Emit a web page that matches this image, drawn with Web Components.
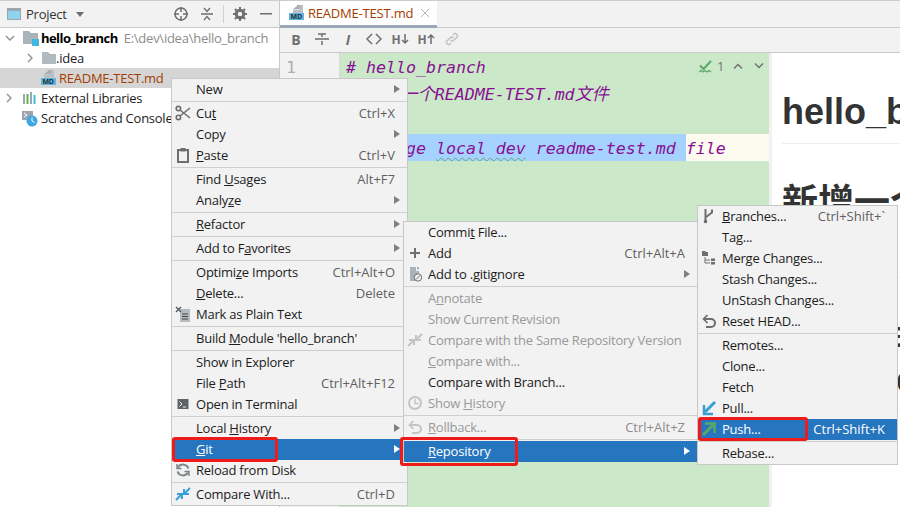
<!DOCTYPE html>
<html lang="en">
<head>
<meta charset="utf-8">
<title>Git push menu</title>
<style>
  html, body { margin: 0; padding: 0; background: #fff; overflow: hidden; }
  body { width: 900px; height: 507px; font: 13px "Open Sans", "Noto Sans CJK SC", sans-serif; }
  svg { display: block; }
</style>
</head>
<body>
<ide-window>
  <project-panel slot="left"></project-panel>
  <editor-pane slot="center"><md-preview></md-preview></editor-pane>

  <popup-menu slot="overlay" style="left:171px;top:77px;width:235px">
    <menu-item arrow>New</menu-item>
    <menu-sep></menu-sep>
    <menu-item shortcut="Ctrl+X"><svg slot="icon" width="16" height="16" viewBox="0 0 16 16" fill="none" stroke="#6e6e6e" stroke-width="1.6"><circle cx="3.4" cy="3.6" r="2.2"/><circle cx="3.4" cy="12.4" r="2.2"/><path d="M5 5 15 13M5 11 15 3"/></svg>Cu<u>t</u></menu-item>
    <menu-item arrow>Copy</menu-item>
    <menu-item shortcut="Ctrl+V"><svg slot="icon" width="16" height="16" viewBox="0 0 16 16" fill="none"><rect x="3" y="3" width="10" height="12" stroke="#6e6e6e" stroke-width="2"/><rect x="5.5" y="1" width="5" height="3.5" fill="#6e6e6e"/></svg><u>P</u>aste</menu-item>
    <menu-sep></menu-sep>
    <menu-item shortcut="Alt+F7">Find <u>U</u>sages</menu-item>
    <menu-item arrow>Analy<u>z</u>e</menu-item>
    <menu-sep></menu-sep>
    <menu-item arrow><u>R</u>efactor</menu-item>
    <menu-sep></menu-sep>
    <menu-item arrow>Add to F<u>a</u>vorites</menu-item>
    <menu-sep></menu-sep>
    <menu-item shortcut="Ctrl+Alt+O">Optimi<u>z</u>e Imports</menu-item>
    <menu-item shortcut="Delete"><u>D</u>elete...</menu-item>
    <menu-item><svg slot="icon" width="16" height="16" viewBox="0 0 16 16" fill="none"><rect x="5" y="3" width="10" height="13" fill="#b4bcc2"/><path d="M1 1 6 6M6 1 1 6" stroke="#555" stroke-width="1.3"/><path d="M7 8h6M7 10.5h6M7 13h6" stroke="#444"/></svg>Mark as Plain Text</menu-item>
    <menu-sep></menu-sep>
    <menu-item>Build <u>M</u>odule 'hello_branch'</menu-item>
    <menu-sep></menu-sep>
    <menu-item>Show in Explorer</menu-item>
    <menu-item shortcut="Ctrl+Alt+F12">File <u>P</u>ath</menu-item>
    <menu-item><svg slot="icon" width="16" height="16" viewBox="0 0 16 16" fill="none"><rect x="2.5" y="3" width="11" height="10" fill="#5f6468"/><path d="M4.5 5.5 7 8 4.5 10.5M8 11h3" stroke="#f2f2f2"/></svg>Open in Terminal</menu-item>
    <menu-sep></menu-sep>
    <menu-item arrow>Local <u>H</u>istory</menu-item>
    <menu-item arrow selected><u>G</u>it</menu-item>
    <menu-item><svg slot="icon" width="16" height="16" viewBox="0 0 16 16" fill="none" stroke="#7d8488" stroke-width="2"><path d="M13.5 6.5A5.8 5.8 0 0 0 3 5.5M2.5 9.5A5.8 5.8 0 0 0 13 10.5"/><path d="M2 2v4.5h4.5M14 14V9.5H9.5" stroke-width="1.5"/></svg>Reload from Disk</menu-item>
    <menu-sep></menu-sep>
    <menu-item shortcut="Ctrl+D"><svg slot="icon" width="16" height="16" viewBox="0 0 16 16" fill="none" stroke="#389fd6" stroke-width="2"><path d="M15 2 9.5 7.5M9 3v5h5"/><path d="M1 14 6.5 8.5M7 13V8H2"/></svg>Compare With...</menu-item>
  </popup-menu>

  <popup-menu slot="overlay" style="left:403px;top:220px;width:293px;border-bottom:none">
    <menu-item>Commi<u>t</u> File...</menu-item>
    <menu-item shortcut="Ctrl+Alt+A"><svg slot="icon" width="16" height="16" viewBox="0 0 16 16" fill="none" stroke="#6e6e6e" stroke-width="2"><path d="M8 3v10M3 8h10"/></svg>Add</menu-item>
    <menu-item arrow><svg slot="icon" width="16" height="16" viewBox="0 0 16 16" fill="none"><path d="M3 1h6v4h3v10H3z" fill="#aab3b9"/><path d="M10 1h2v2.5h-2z" fill="#aab3b9"/><circle cx="11" cy="11.5" r="3.7" fill="#f2f2f2" stroke="#6e6e6e"/><path d="M9 13.5 13 9.5" stroke="#6e6e6e"/></svg>Add to .gitignore</menu-item>
    <menu-sep></menu-sep>
    <menu-item disabled>A<u>n</u>notate</menu-item>
    <menu-item disabled>Show Current Revision</menu-item>
    <menu-item disabled><svg slot="icon" width="16" height="16" viewBox="0 0 16 16" fill="none" stroke="#c4c4c4" stroke-width="2"><path d="M15 2 9.5 7.5M9 3v5h5"/><path d="M1 14 6.5 8.5M7 13V8H2"/></svg>Compare with the Same Repository Version</menu-item>
    <menu-item disabled><u>C</u>ompare with...</menu-item>
    <menu-item>Compare with Branch...</menu-item>
    <menu-item disabled><svg slot="icon" width="16" height="16" viewBox="0 0 16 16" fill="none" stroke="#c4c4c4" stroke-width="2"><circle cx="8" cy="8" r="6"/><path d="M8 4v4.5h3.5" stroke-width="1.5"/></svg>Show <u>H</u>istory</menu-item>
    <menu-sep></menu-sep>
    <menu-item disabled shortcut="Ctrl+Alt+Z"><svg slot="icon" width="16" height="16" viewBox="0 0 16 16" fill="none" stroke="#c4c4c4" stroke-width="2"><path d="M3 6h7a4 4 0 0 1 0 8H5"/><path d="M6.5 2 2.5 6l4 4" stroke-width="1.7"/></svg><u>R</u>ollback...</menu-item>
    <menu-sep></menu-sep>
    <menu-item arrow selected><u>R</u>epository</menu-item>
  </popup-menu>

  <popup-menu slot="overlay" style="left:697px;top:204px;width:199px">
    <menu-item shortcut="Ctrl+Shift+`"><svg slot="icon" width="16" height="16" viewBox="0 0 16 16" fill="none" stroke="#6e6e6e" stroke-width="2"><path d="M4.5 1v14"/><path d="M11 1.5v3L5 9"/><circle cx="4.5" cy="13.5" r=".8"/></svg><u>B</u>ranches...</menu-item>
    <menu-item>Tag...</menu-item>
    <menu-item><svg slot="icon" width="16" height="16" viewBox="0 0 16 16" fill="none"><path d="M1 1h3l1 1h2v4H1z" fill="#6e6e6e"/><path d="M4 7v6h5M4 10h5" stroke="#6e6e6e"/><rect x="10" y="8.5" width="4" height="2.5" fill="#6e6e6e"/><rect x="10" y="12" width="4" height="2.5" fill="#6e6e6e"/></svg>Merge Changes...</menu-item>
    <menu-item>Stash Changes...</menu-item>
    <menu-item>UnStash Changes...</menu-item>
    <menu-item><svg slot="icon" width="16" height="16" viewBox="0 0 16 16" fill="none" stroke="#6e6e6e" stroke-width="2"><path d="M3 6h7a4 4 0 0 1 0 8H5"/><path d="M6.5 2 2.5 6l4 4" stroke-width="1.7"/></svg>Reset HEAD...</menu-item>
    <menu-sep></menu-sep>
    <menu-item>Remotes...</menu-item>
    <menu-item>Clone...</menu-item>
    <menu-item>Fetch</menu-item>
    <menu-item><svg slot="icon" width="16" height="16" viewBox="0 0 16 16" fill="none" stroke="#389fd6" stroke-width="3"><path d="M14 2 4 12"/><path d="M3 5v9h9" stroke-width="2.5"/></svg>Pull...</menu-item>
    <menu-item selected shortcut="Ctrl+Shift+K"><svg slot="icon" width="16" height="16" viewBox="0 0 16 16" fill="none" stroke="#59a869" stroke-width="3"><path d="M2 14 12 4"/><path d="M4 2.5h9.5V12" stroke-width="2.5"/></svg>Push...</menu-item>
    <menu-sep></menu-sep>
    <menu-item>Rebase...</menu-item>
  </popup-menu>

  <red-mark slot="overlay" style="left:172px;top:436px;width:100px;height:19px"></red-mark>
  <red-mark slot="overlay" style="left:400px;top:436px;width:112px;height:23px"></red-mark>
  <red-mark slot="overlay" style="left:698px;top:416px;width:104px;height:18px"></red-mark>
</ide-window>

<script>
const sheet = `
  :host { box-sizing: border-box; }
  * { box-sizing: border-box; }
  svg { display: block; flex: none; }
`;

class IdeWindow extends HTMLElement {
  constructor() {
    super();
    this.attachShadow({ mode: 'open' });
    this.shadowRoot.innerHTML = `
      <style>
        ${sheet}
        :host { display: flex; position: relative; width: 900px; height: 507px; overflow: hidden; border-top: 1px solid #cdcdcd; background: #fff; color: #1c1c1c; }
        .left { flex: none; width: 280px; border-right: 1px solid #c9c9c9; display: flex; }
        .center { flex: 1; min-width: 0; display: flex; }
      </style>
      <div class="left"><slot name="left"></slot></div>
      <div class="center"><slot name="center"></slot></div>
      <slot name="overlay"></slot>
    `;
  }
}

class ProjectPanel extends HTMLElement {
  constructor() {
    super();
    this.attachShadow({ mode: 'open' });
    const md = `<svg width="16" height="16" viewBox="0 0 16 16"><path d="M8 0h3v4H8zM4 4h4V1L4 4z" fill="#a8b0b6"/><path d="M11 0h3v8h-3zM4 4.5h7V8H4z" fill="#b9c0c5"/><rect x="1" y="8" width="15" height="7" fill="#61b4e0"/><text x="2.5" y="14.2" font-family="Open Sans" font-weight="700" font-size="7" fill="#233">MD</text></svg>`;
    this.shadowRoot.innerHTML = `
      <style>
        ${sheet}
        :host { display: flex; flex-direction: column; width: 100%; background: #fff; font: 13px "Open Sans", sans-serif; letter-spacing: -.25px; }
        header { height: 27px; flex: none; background: #f2f2f2; border-bottom: 1px solid #c9c9c9; display: flex; align-items: center; padding-left: 7px; color: #333; }
        header .name { margin-left: 5px; }
        header .tools { display: flex; align-items: center; margin-left: auto; }
        .bar { width: 1px; height: 18px; background: #d0d0d0; }
        .row { height: 20px; display: flex; align-items: center; white-space: nowrap; position: relative; }
        .row svg { margin-right: 2px; }
        .chev { width: 16px; margin-left: 2px; margin-right: 2px !important; }
        .sel { background: #d5d5d5; }
        .path { color: #8c8c8c; margin-left: 6px; }
        .brown { color: #a33c00; }
      </style>
      <header>
        <svg width="14" height="14" viewBox="0 0 14 14"><rect x=".5" y="1.5" width="13" height="11" fill="#8fd3ef" stroke="#9aa7b0"/><rect x="1" y="2" width="12" height="2" fill="#9aa7b0"/></svg>
        <span class="name">Project</span>
        <svg style="margin-left:9px" width="8" height="5" viewBox="0 0 8 5"><path d="M0 0h8L4 5z" fill="#6e6e6e"/></svg>
        <div class="tools">
          <svg style="margin-right:11px" width="16" height="16" viewBox="0 0 16 16" fill="none" stroke="#6e6e6e" stroke-width="1.5"><circle cx="8" cy="8" r="6"/><path d="M8 1v5M8 10v5M1 8h5M10 8h5"/></svg>
          <svg style="margin-right:9px" width="14" height="16" viewBox="0 0 14 16" fill="none" stroke="#6e6e6e" stroke-width="1.3"><path d="M1 8h12M4 2l3 3.5L10 2M4 14l3-3.5L10 14"/></svg>
          <div class="bar"></div>
          <svg style="margin:0 13px 0 9px" width="14" height="14" viewBox="0 0 14 14"><circle cx="7" cy="7" r="3.8" fill="none" stroke="#6e6e6e" stroke-width="3"/><path d="M7 0v3M7 11v3M0 7h3M11 7h3M2 2l2 2M10 10l2 2M12 2l-2 2M4 10l-2 2" stroke="#6e6e6e" stroke-width="2"/></svg>
          <svg style="margin-right:7px" width="12" height="2" viewBox="0 0 12 2"><rect width="12" height="1.5" fill="#6e6e6e"/></svg>
        </div>
      </header>
      <div class="row">
        <svg class="chev" style="margin-left:2px" width="16" height="16" viewBox="0 0 16 16" fill="none" stroke="#8c8c8c" stroke-width="1.3"><path d="M4 6l4 4 4-4"/></svg>
        <svg style="margin-left:2px;margin-right:1px" width="18" height="16" viewBox="0 0 18 16"><path d="M1 1h6l2 2h7v11H1z" fill="#a9b3ba"/><rect x="10" y="9" width="7" height="7" fill="#40b6e0"/></svg>
        <b style="font-weight:700;color:#000;letter-spacing:-.55px">hello_branch</b>
        <span class="path">E:\\dev\\idea\\hello_branch</span>
      </div>
      <div class="row" style="padding-left:20px">
        <svg class="chev" width="16" height="16" viewBox="0 0 16 16" fill="none" stroke="#8c8c8c" stroke-width="1.3"><path d="M6 4l4 4-4 4"/></svg>
        <svg style="margin-left:1px;margin-right:0" width="16" height="16" viewBox="0 0 16 16"><path d="M1 2h6l2 2h6v10H1z" fill="#b1bac0"/></svg>
        <span style="margin-left:-1px">.idea</span>
      </div>
      <div class="row sel" style="padding-left:40px">${md}<span class="brown" style="margin-left:1px">README-TEST.md</span></div>
      <div class="row">
        <svg class="chev" width="16" height="16" viewBox="0 0 16 16" fill="none" stroke="#8c8c8c" stroke-width="1.3" style="margin-left:1px"><path d="M6 4l4 4-4 4"/></svg>
        <svg style="margin-left:4px;margin-right:4px" width="14" height="14" viewBox="0 0 14 14" fill="none" stroke-width="2"><path d="M1 3v10" stroke="#9aa7b0"/><path d="M4.5 3v10" stroke="#62b543"/><path d="M8 1v12" stroke="#9aa7b0"/><path d="M11.5 4v9" stroke="#40b6e0"/></svg>
        <span>External Libraries</span>
      </div>
      <div class="row" style="padding-left:21px">
        <svg style="margin-right:3px" width="17" height="17" viewBox="0 0 17 17"><rect x="1" y="1" width="11" height="9" fill="#9aa7b0"/><path d="M3 3l3 2-3 2" stroke="#fff" fill="none"/><circle cx="11" cy="11" r="5.5" fill="#40a8e0"/><path d="M11 7.5V11l2.5 1.5" stroke="#fff" fill="none"/></svg>
        <span>Scratches and Consoles</span>
      </div>
    `;
  }
}

class EditorPane extends HTMLElement {
  constructor() {
    super();
    this.attachShadow({ mode: 'open' });
    this.shadowRoot.innerHTML = `
      <style>
        ${sheet}
        :host { display: flex; flex-direction: column; width: 100%; height: 100%; background: #f2f2f2; }
        .tabs { height: 27px; flex: none; border-bottom: 1px solid #c9c9c9; display: flex; }
        .tab { width: 157px; height: 27px; background: #fff; border-bottom: 3px solid #9ca7b8; display: flex; align-items: center; padding-left: 9px; font: 13px "Open Sans", sans-serif; color: #a33c00; letter-spacing: -.2px; position: relative; }
        .tab span { margin-left: 3px; }
        .tab .x { position: absolute; left: 140px; top: 7px; }
        .tools { height: 25px; flex: none; border-bottom: 1px solid #c9c9c9; padding-bottom: 2px; display: flex; align-items: center; font: 700 14px "Open Sans", sans-serif; color: #707070; }
        .tool { width: 26px; display: flex; justify-content: center; align-items: center; height: 22px; }
        .tool.h { font-size: 12px; }
        .body { flex: 1; display: flex; min-height: 0; }
        .gutter { width: 60px; flex: none; border-right: 1px solid #d9d9d9; color: #a9b0b6; font: 16.6px/29px "DejaVu Sans Mono", monospace; padding-left: 6px; }
        .code { width: 429px; flex: none; background: #cbe8c8; position: relative; font: italic 16.6px/29px "DejaVu Sans Mono", "Noto Sans CJK SC", monospace; color: #871094; }
        .line { height: 27px; padding-left: 6px; white-space: pre; }
        .cjk { font-size: 17.2px; }
        .caret { background: #fdfbf0; }
        .picked { background: #a6d2ff; display: inline-block; height: 27px; }
        .weak { text-decoration: underline wavy #62a87a 1px; text-underline-offset: 3px; }
        .widget { position: absolute; left: 359px; top: 4px; display: flex; align-items: center; font: 13px "Open Sans", sans-serif; color: #6e7a70; height: 18px; }
        .preview { flex: 1; min-width: 0; display: flex; }
      </style>
      <div class="tabs">
        <div class="tab">
          <svg width="16" height="16" viewBox="0 0 16 16"><path d="M8 0h3v4H8zM4 4h4V1L4 4z" fill="#a8b0b6"/><path d="M11 0h3v8h-3zM4 4.5h7V8H4z" fill="#b9c0c5"/><rect x="0" y="8" width="15" height="7" fill="#61b4e0"/><text x="1.5" y="14.2" font-family="Open Sans" font-weight="700" font-size="7" fill="#233">MD</text></svg>
          <span>README-TEST.md</span>
          <svg class="x" width="10" height="10" viewBox="0 0 10 10" fill="none" stroke="#b4b4b4"><path d="M1 1l8 8M9 1l-8 8"/></svg>
        </div>
      </div>
      <div class="tools">
        <div class="tool" style="margin-left:3px">B</div>
        <div class="tool"><svg width="14" height="14" viewBox="0 0 14 14" fill="none" stroke="#6e6e6e" stroke-width="1.5"><path d="M3 2h8M7 2v3M0 7h14M7 9v4"/></svg></div>
        <div class="tool" style="font-style:italic">I</div>
        <div class="tool"><svg width="16" height="14" viewBox="0 0 16 14" fill="none" stroke="#6e6e6e" stroke-width="1.5"><path d="M6 2 1 7l5 5M10 2l5 5-5 5"/></svg></div>
        <div class="tool h">H<svg width="8" height="12" viewBox="0 0 8 12" fill="none" stroke="#6e6e6e" stroke-width="1.5"><path d="M4 1v9M1 7l3 3 3-3"/></svg></div>
        <div class="tool h">H<svg width="8" height="12" viewBox="0 0 8 12" fill="none" stroke="#6e6e6e" stroke-width="1.5"><path d="M4 11V2M1 5l3-3 3 3"/></svg></div>
        <div class="tool"><svg width="14" height="14" viewBox="0 0 14 14" fill="none" stroke="#c4c4c4" stroke-width="1.5"><path d="M8 3l1.5-1.5a2.5 2.5 0 0 1 3 3L9 8a2.5 2.5 0 0 1-3.5 0"/><path d="M6 11l-1.5 1.5a2.5 2.5 0 0 1-3-3L5 6a2.5 2.5 0 0 1 3.5 0"/></svg></div>
      </div>
      <div class="body">
        <div class="gutter">1</div>
        <div class="code">
          <div class="line"># hello_branch</div>
          <div class="line"># <span class="cjk">新增一个</span>README-TEST.md<span class="cjk">文件</span></div>
          <div class="line"></div>
          <div class="line caret"><span class="picked"># change <span class="weak">local dev</span> readme-test.md </span>file</div>
          <div class="widget">
            <svg width="13" height="13" viewBox="0 0 13 13" fill="none" stroke="#59a869" stroke-width="2"><path d="M1 5.5 4.5 9 12 1"/><path d="M0 12l2-1.5 2 1.5 2-1.5 2 1.5 2-1.5 2 1.5" stroke-width="1.2"/></svg>
            <span style="margin-left:5px">1</span>
            <svg style="margin-left:9px" width="10" height="6" viewBox="0 0 10 6" fill="none" stroke="#6e6e6e" stroke-width="1.3"><path d="M1 5.5 5 1.5l4 4"/></svg>
            <svg style="margin-left:11px" width="10" height="6" viewBox="0 0 10 6" fill="none" stroke="#6e6e6e" stroke-width="1.3"><path d="M1 .5l4 4 4-4"/></svg>
          </div>
        </div>
        <div class="preview"><slot></slot></div>
      </div>
    `;
  }
}

class MdPreview extends HTMLElement {
  constructor() {
    super();
    this.attachShadow({ mode: 'open' });
    this.shadowRoot.innerHTML = `
      <style>
        ${sheet}
        :host { display: block; width: 100%; height: 100%; overflow: hidden; background: #fff; padding: 36px 0 0 10px; border-left: 3px solid #f2f2f2; }
        h1 { width: 800px; height: 55px; margin: 0 0 36px; padding-bottom: 9px; border-bottom: 1px solid #eee; font: 700 36px/45px "Liberation Sans", "Noto Sans CJK SC", sans-serif; color: #333; white-space: nowrap; }
        h1.two { height: 98px; margin-bottom: 34px; }
      </style>
      <h1>hello_branch</h1>
      <h1 class="two">新增一个README-TEST.md文件</h1>
      <h1 class="two">change<br>local dev readme-test.md file</h1>
    `;
  }
}

class PopupMenu extends HTMLElement {
  constructor() {
    super();
    this.attachShadow({ mode: 'open' });
    this.shadowRoot.innerHTML = `
      <style>
        ${sheet}
        :host { display: block; position: absolute; box-sizing: content-box; background: #f2f2f2; border: 1px solid #c8c8c8; font: 13px "Open Sans", sans-serif; letter-spacing: -.23px; color: #1c1c1c; }
      </style>
      <slot></slot>
    `;
  }
}

class MenuItem extends HTMLElement {
  constructor() {
    super();
    this.attachShadow({ mode: 'open' });
    this.shadowRoot.innerHTML = `
      <style>
        ${sheet}
        :host { display: flex; align-items: center; height: 21px; padding: 0 12px 2px 0; white-space: nowrap; }
        :host([selected]) { background: #2675bf; color: #fff; }
        :host([disabled]) { color: #999; }
        .icon { width: 24px; flex: none; padding-left: 3px; }
        .label { flex: 1; }
        .keys { color: #5f5f5f; margin-left: 20px; letter-spacing: 0; }
        :host([selected]) .keys { color: #fff; }
        :host([disabled]) .keys { color: #8c8c8c; }
        .arrow { width: 0; height: 0; border-left: 6px solid #7f7f7f; border-top: 4px solid transparent; border-bottom: 4px solid transparent; margin-right: -5px; display: none; }
        :host([arrow]) .arrow { display: block; }
        :host([selected]) .arrow { border-left-color: #fff; }
      </style>
      <div class="icon"><slot name="icon"></slot></div>
      <div class="label"><slot></slot></div>
      <span class="keys"></span>
      <div class="arrow"></div>
    `;
  }

  connectedCallback() {
    this.shadowRoot.querySelector('.keys').textContent = this.getAttribute('shortcut') || '';
  }
}

class MenuSep extends HTMLElement {
  constructor() {
    super();
    this.attachShadow({ mode: 'open' });
    this.shadowRoot.innerHTML = `
      <style>
        :host { display: block; height: 1px; margin: 1px 0; background: #cfcfcf; }
      </style>
    `;
  }
}

class RedMark extends HTMLElement {
  constructor() {
    super();
    this.attachShadow({ mode: 'open' });
    this.shadowRoot.innerHTML = `
      <style>
        :host { display: block; position: absolute; box-sizing: content-box; border: 3px solid #ef1a1a; border-radius: 3px; }
      </style>
    `;
  }
}

customElements.define('ide-window', IdeWindow);
customElements.define('project-panel', ProjectPanel);
customElements.define('editor-pane', EditorPane);
customElements.define('md-preview', MdPreview);
customElements.define('popup-menu', PopupMenu);
customElements.define('menu-item', MenuItem);
customElements.define('menu-sep', MenuSep);
customElements.define('red-mark', RedMark);
</script>
</body>
</html>
